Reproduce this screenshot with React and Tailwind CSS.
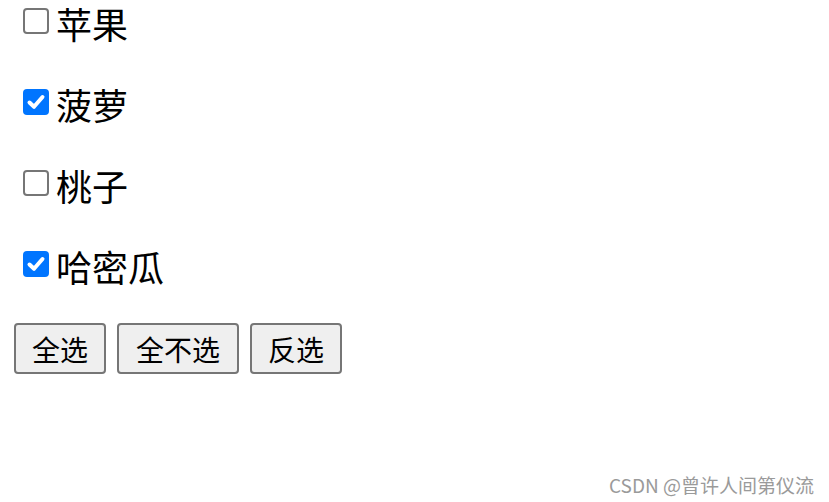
import React from 'react';

const fruits = [
  { name: '苹果', checked: false },
  { name: '菠萝', checked: true },
  { name: '桃子', checked: false },
  { name: '哈密瓜', checked: true },
];

const Box = ({ checked }) =>
  checked ? (
    <span className="flex h-[26px] w-[26px] shrink-0 items-center justify-center rounded-[4px] bg-[#0075ff]">
      <svg width="20" height="20" viewBox="0 0 20 20">
        <path d="M3.5 10.5 L8 14.8 L16.5 5" fill="none" stroke="#fff" strokeWidth="4" strokeLinecap="round" strokeLinejoin="round" />
      </svg>
    </span>
  ) : (
    <span className="h-[26px] w-[26px] shrink-0 rounded-[4px] border-2 border-[#767676] bg-white" />
  );

const App = () => {
  return (
    <div
      className="flex h-[502px] w-[829px] flex-col bg-white text-black"
      style={{ fontFamily: '"Noto Sans CJK SC", "Noto Sans", sans-serif' }}
    >
      <div className="flex flex-col gap-[41px] pt-[1px]">
        {fruits.map((f) => (
          <label key={f.name} className="flex h-[40px] items-center pl-[23px]">
            <Box checked={f.checked} />
            <span className="ml-[7px] mt-[4px] text-[36px] leading-[40px]">{f.name}</span>
          </label>
        ))}
      </div>

      <div className="mt-[39px] flex gap-[11px] pl-[14px]">
        {['全选', '全不选', '反选'].map((b) => (
          <button
            key={b}
            className={`flex h-[51px] items-center justify-center rounded-[4px] border-2 border-[#767676] bg-[#efefef] text-[28px] leading-none ${b === '全不选' ? 'w-[122px]' : 'w-[92px]'}`}
          >
            {b}
          </button>
        ))}
      </div>

      <div className="mt-auto flex justify-end pb-[8px] pr-[15px]">
        <span className="text-[19px] leading-none text-[#9a9a9a]">CSDN @曾许人间第仪流</span>
      </div>
    </div>
  );
};

export default App;
